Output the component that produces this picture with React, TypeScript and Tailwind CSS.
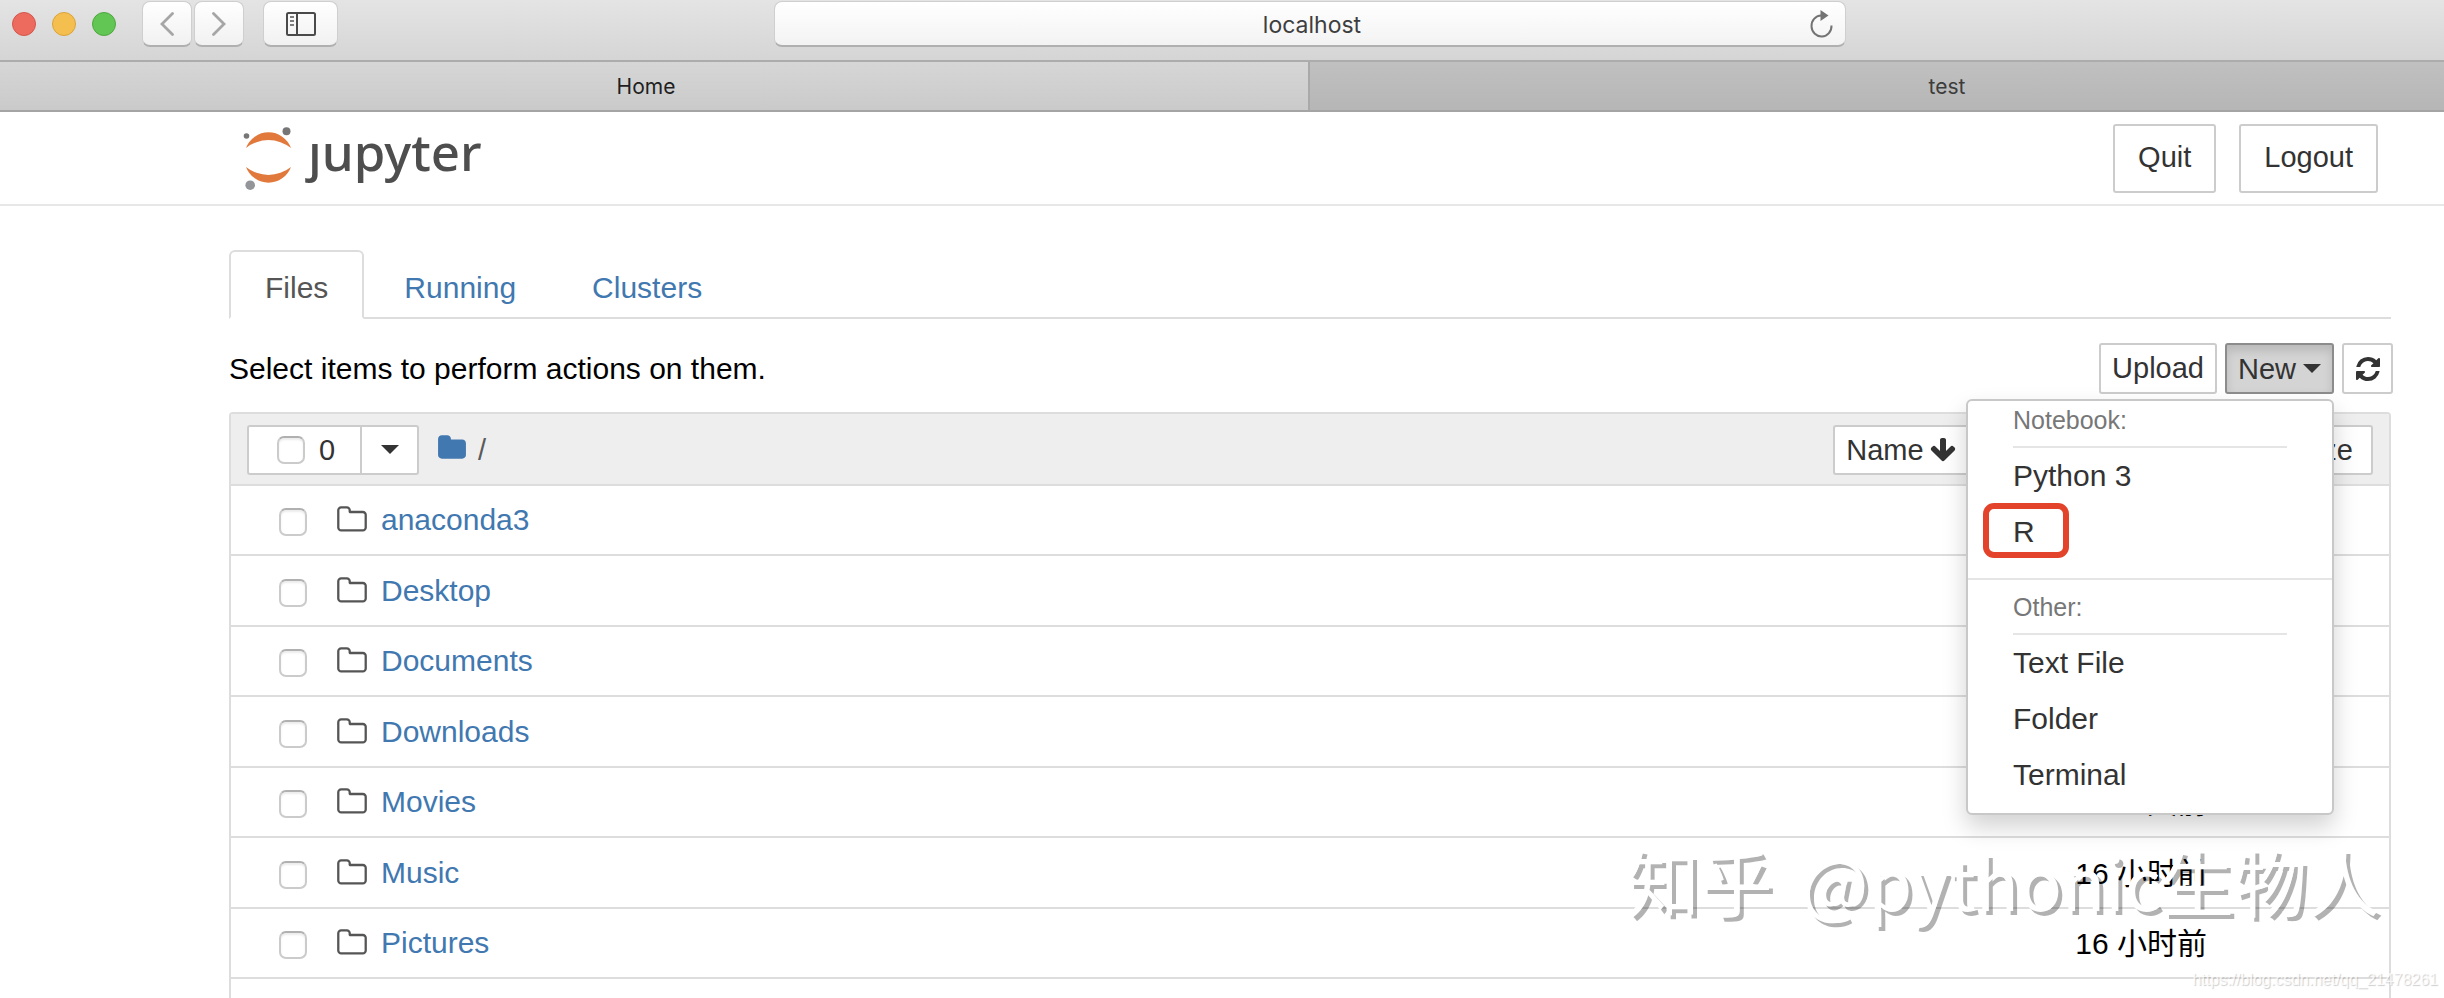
import React, { useState } from 'react';

interface FileEntry {
    name: string;
    modified?: string;
}

const FILES: FileEntry[] = [
    { name: 'anaconda3' },
    { name: 'Desktop' },
    { name: 'Documents' },
    { name: 'Downloads' },
    { name: 'Movies', modified: '9 天前' },
    { name: 'Music', modified: '16 小时前' },
    { name: 'Pictures', modified: '16 小时前' },
];

const TABS = ['Files', 'Running', 'Clusters'];

const ICONS = {
    folder: 'M1728 608v704q0 92-66 158t-158 66h-1216q-92 0-158-66t-66-158v-960q0-92 66-158t158-66h320q92 0 158 66t66 158v32h672q92 0 158 66t66 158z',
    folderOpen: 'M1600 1312v-704q0-40-28-68t-68-28h-704q-40 0-68-28t-28-68v-64q0-40-28-68t-68-28h-320q-40 0-68 28t-28 68v960q0 40 28 68t68 28h1216q40 0 68-28t28-68zm128-704v704q0 92-66 158t-158 66h-1216q-92 0-158-66t-66-158v-960q0-92 66-158t158-66h320q92 0 158 66t66 158v32h672q92 0 158 66t66 158z',
    refresh: 'M1639 1056q0 5-1 7-64 268-268 434.5t-478 166.5q-146 0-282.5-55t-243.5-157l-129 129q-19 19-45 19t-45-19-19-45v-448q0-26 19-45t45-19h448q26 0 45 19t19 45-19 45l-137 137q71 66 161 102t187 36q134 0 250-65t186-179q11-17 53-117 8-23 30-23h192q13 0 22.5 9.5t9.5 22.5zm25-800v448q0 26-19 45t-45 19h-448q-26 0-45-19t-19-45 19-45l138-138q-148-137-349-137-134 0-250 65t-186 179q-11 17-53 117-8 23-30 23h-199q-13 0-22.5-9.5t-9.5-22.5v-7q65-268 270-434.5t480-166.5q146 0 284 55.5t245 156.5l130-129q19-19 45-19t45 19 19 45z',
    arrowDown: 'M1675 832q0 53-37 90l-651 652q-39 37-91 37-53 0-90-37l-651-652q-38-36-38-90 0-53 38-91l74-75q39-37 91-37 53 0 90 37l294 294v-704q0-52 38-90t90-38h128q52 0 90 38t38 90v704l294-294q37-37 90-37 52 0 91 37l75 75q37 39 37 91z',
};

function Icon({ path, className }: { path: string; className: string }) {
    return (
        <svg viewBox="0 0 1792 1792" fill="currentColor" className={className} aria-hidden="true">
            <path d={path} />
        </svg>
    );
}

function Caret() {
    return (
        <svg viewBox="0 0 18 9" fill="currentColor" className="w-[18px] h-[9px]" aria-hidden="true">
            <path d="M0 0h18l-9 9z" />
        </svg>
    );
}

function Checkbox({ label }: { label: string }) {
    return (
        <input
            type="checkbox"
            aria-label={label}
            className="block appearance-none w-7 h-7 shrink-0 rounded-[7px] border-2 border-[#cbcbcb] border-t-[#b0b0b0] bg-white shadow-[inset_0_2px_2px_rgba(0,0,0,0.08)] checked:bg-[#4178b0]"
        />
    );
}

function BrowserChrome() {
    return (
        <div className="font-['Inter',sans-serif]">
            <div className="h-[62px] pt-px pl-3 flex items-start border-b-2 border-[#acacac] bg-linear-to-b from-[#e4e4e4] to-[#d5d5d5]">
                <div className="h-[46px] flex items-center gap-4">
                    <span className="w-6 h-6 rounded-full bg-[#ed6a5e] border border-[#d5564b]" />
                    <span className="w-6 h-6 rounded-full bg-[#f5bf4f] border border-[#d9a33c]" />
                    <span className="w-6 h-6 rounded-full bg-[#62c654] border border-[#4fa73f]" />
                </div>
                <div className="ml-[26px] flex gap-[2px]">
                    <button aria-label="Back" className="w-[50px] h-[46px] flex items-center justify-center rounded-lg border border-[#cfcfcf] border-b-2 border-b-[#b0b0b0] bg-linear-to-b from-white to-[#f1f1f1]">
                        <svg viewBox="0 0 14 24" className="w-[14px] h-6" fill="none" stroke="#a6a6a6" strokeWidth="2.8" strokeLinecap="round">
                            <path d="M12.500 1.500 2 12l10.500 10.500" />
                        </svg>
                    </button>
                    <button aria-label="Forward" className="w-[50px] h-[46px] flex items-center justify-center rounded-lg border border-[#cfcfcf] border-b-2 border-b-[#b0b0b0] bg-linear-to-b from-white to-[#f1f1f1]">
                        <svg viewBox="0 0 14 24" className="w-[14px] h-6" fill="none" stroke="#a6a6a6" strokeWidth="2.8" strokeLinecap="round">
                            <path d="M1.500 1.500 12 12 1.500 22.500" />
                        </svg>
                    </button>
                </div>
                <button aria-label="Sidebar" className="ml-[19px] w-[75px] h-[46px] flex items-center justify-center rounded-lg border border-[#cfcfcf] border-b-2 border-b-[#b0b0b0] bg-linear-to-b from-white to-[#f1f1f1]">
                    <svg viewBox="0 0 30 24" className="w-[30px] h-6" fill="none" stroke="#4a4a4a" strokeWidth="2">
                        <rect x="1" y="1" width="28" height="22" rx="1.5" />
                        <path d="M11 1v22" />
                        <path d="M4 5h4M4 9h4M4 13h4" stroke="#7d7d7d" />
                    </svg>
                </button>
                <div className="ml-[436px] mr-[598px] flex-1 h-[46px] flex items-center rounded-lg border border-[#cfcfcf] border-b-2 border-b-[#b0b0b0] bg-linear-to-b from-white to-[#f3f3f3]">
                    <input
                        aria-label="Address"
                        defaultValue="localhost"
                        className="flex-1 min-w-0 pt-[2px] pl-10 text-center text-[23px] leading-7 text-[#3e3e3e] bg-transparent outline-none"
                    />
                    <button aria-label="Reload" className="mr-3">
                        <svg viewBox="0 0 24 28" className="w-6 h-7 block" fill="none" stroke="#737373" strokeWidth="2">
                            <path d="M12 5.500a10 10.500 0 1 0 10.500 10" />
                            <path d="M11.500 0v11l8-5.500z" fill="#737373" stroke="none" />
                        </svg>
                    </button>
                </div>
            </div>
            <div className="h-[50px] flex border-b-2 border-[#a4a4a4] text-[21px] leading-6">
                <button className="w-[1310px] pt-[2px] pr-4 border-r-2 border-[#a9a9a9] text-[#1f1f1f] bg-linear-to-b from-[#d6d6d6] to-[#cacaca]">
                    Home
                </button>
                <button className="flex-1 pt-[2px] pl-[140px] text-[#3c3c3c] bg-linear-to-b from-[#c0c0c0] to-[#b6b6b6]">
                    test
                </button>
            </div>
        </div>
    );
}

function Header() {
    return (
        <header className="h-[94px] pl-[243px] pr-[66px] flex items-center justify-between border-b-2 border-[#e7e7e7]">
            <a href="#" aria-label="jupyter" className="flex items-center gap-4 text-[#4e4e4e]">
                <svg viewBox="0 0 49 63" className="w-[49px] h-[63px]" aria-hidden="true">
                    <path d="M3 21A24 24 0 0 1 48 21A36 36 0 0 0 3 21z" fill="#e2793c" />
                    <path d="M3 40A24 24 0 0 0 48 40A36 36 0 0 1 3 40z" fill="#e2793c" />
                    <circle cx="3.500" cy="9" r="2.800" fill="#767677" />
                    <circle cx="43.500" cy="4.200" r="4" fill="#767677" />
                    <circle cx="7.200" cy="58.200" r="4.800" fill="#939598" />
                </svg>
                <span className="pb-[14px] text-[51px] leading-[60px] font-medium font-['Noto_Sans',sans-serif]">ȷupyter</span>
            </a>
            <div className="flex gap-[23px] text-[29px] leading-8 text-[#333]">
                <button className="h-[69px] px-[23px] pb-[2px] border-2 border-[#ccc] rounded-[3px] bg-white">Quit</button>
                <button className="h-[69px] px-[23px] pb-[2px] border-2 border-[#ccc] rounded-[3px] bg-white">Logout</button>
            </div>
        </header>
    );
}

function NewMenu() {
    return (
        <div className="absolute right-0 top-full z-10 mt-[5px] w-[368px] pb-[10px] rounded-md border-2 border-[#c8c8c8] bg-white text-left shadow-[0_12px_24px_rgba(0,0,0,0.18)]">
            <div className="px-[45px]">
                <div className="h-[45px] pb-2 flex items-center text-[25px] leading-8 text-[#777]">Notebook:</div>
                <hr className="border-t-2 border-[#e5e5e5]" />
                <a href="#" className="h-14 pb-[2px] flex items-center">Python 3</a>
                <a href="#" className="h-14 pb-[2px] flex items-center relative">
                    R
                    <span className="absolute -left-[30px] -top-px w-[86px] h-[55px] rounded-[11px] border-[6px] border-[#e2432a]" />
                </a>
            </div>
            <hr className="mt-[18px] border-t-2 border-[#e5e5e5]" />
            <div className="px-[45px]">
                <div className="h-[53px] flex items-center text-[25px] leading-8 text-[#777]">Other:</div>
                <hr className="border-t-2 border-[#e5e5e5]" />
                <a href="#" className="h-14 pb-[2px] flex items-center">Text File</a>
                <a href="#" className="h-14 pb-[2px] flex items-center">Folder</a>
                <a href="#" className="h-14 pb-[2px] flex items-center">Terminal</a>
            </div>
        </div>
    );
}

function Toolbar() {
    const [open, setOpen] = useState(true);

    return (
        <div className="mt-6 -mr-[2px] flex items-center justify-between">
            <p className="leading-9">Select items to perform actions on them.</p>
            <div className="flex gap-2 text-[#333]">
                <button className="h-[51px] px-[11px] pb-[2px] text-[29px] leading-8 border-2 border-[#ccc] rounded-[3px] bg-white">Upload</button>
                <div className="relative">
                    <button
                        onClick={() => setOpen(!open)}
                        aria-expanded={open}
                        className="h-[51px] px-[11px] flex items-center gap-[7px] text-[29px] leading-8 border-2 border-[#8c8c8c] rounded-[3px] bg-[#d4d4d4] shadow-[inset_0_6px_10px_rgba(0,0,0,0.125)]"
                    >
                        New <Caret />
                    </button>
                    {open && <NewMenu />}
                </div>
                <button aria-label="Refresh" className="w-[51px] h-[51px] flex items-center justify-center border-2 border-[#ccc] rounded-[3px] bg-white">
                    <Icon path={ICONS.refresh} className="w-7 h-7" />
                </button>
            </div>
        </div>
    );
}

function FileList() {
    return (
        <div className="mt-[18px] flex-1 border-2 border-b-0 border-[#ddd] rounded-t-[4px]">
            <table className="w-full border-separate border-spacing-0">
                <thead>
                    <tr>
                        <th colSpan={3} className="h-[72px] p-0 border-b-2 border-[#ddd] bg-[#eee] font-normal">
                            <div className="pt-px px-4 flex items-center text-[29px] leading-8 text-[#333]">
                                <div className="h-[50px] flex border-2 border-[#ccc] rounded-[3px] bg-white">
                                    <label className="w-[113px] pl-7 flex items-center gap-[14px] border-r-2 border-[#ccc]">
                                        <Checkbox label="Select all" />
                                        0
                                    </label>
                                    <button aria-label="Selection menu" className="w-[55px] flex items-center justify-center">
                                        <Caret />
                                    </button>
                                </div>
                                <a href="#" aria-label="Home folder" className="ml-[18px] pb-[3px] text-[#4178b0]">
                                    <Icon path={ICONS.folder} className="w-[30px] h-[30px]" />
                                </a>
                                <span className="ml-[11px] text-[#5a5a5a]">/</span>
                                <button className="ml-auto h-[50px] pl-[11px] pr-[13px] flex items-center gap-[5px] border-2 border-[#ccc] rounded-[3px] bg-white">
                                    Name <Icon path={ICONS.arrowDown} className="w-7 h-7" />
                                </button>
                                <button className="ml-[261px] h-[50px] pl-3 pr-[18px] border-2 border-[#ccc] rounded-[3px] bg-white">File size</button>
                            </div>
                        </th>
                    </tr>
                </thead>
                <tbody>
                    {FILES.map((file) => (
                        <tr key={file.name} className="odd:h-[70px] even:h-[71px]">
                            <td className="w-[105px] p-0 pl-12 pt-1 border-b-2 border-[#ddd]">
                                <Checkbox label={file.name} />
                            </td>
                            <td className="p-0 border-b-2 border-[#ddd]">
                                <a href="#" className="flex items-center gap-[13px] leading-9 text-[#4178b0]">
                                    <Icon path={ICONS.folderOpen} className="w-8 h-8 text-[#555]" />
                                    {file.name}
                                </a>
                            </td>
                            <td className="p-0 pt-[2px] pr-[182px] border-b-2 border-[#ddd] text-right leading-9">{file.modified}</td>
                        </tr>
                    ))}
                </tbody>
            </table>
        </div>
    );
}

export default function App() {
    return (
        <div className="relative min-h-screen flex flex-col overflow-hidden bg-white text-black font-['Liberation_Sans','Noto_Sans_CJK_SC',sans-serif]">
            <BrowserChrome />
            <Header />
            <main className="flex-1 flex flex-col pt-11 pl-[229px] pr-[53px] text-[30px]">
                <nav className="flex gap-1 border-b-2 border-[#ddd]">
                    {TABS.map((tab, i) => (
                        <a
                            key={tab}
                            href="#"
                            className={
                                i === 0
                                    ? '-mb-[2px] h-[69px] px-[34px] pt-[6px] flex items-center border-2 border-[#ddd] border-b-white rounded-t-[6px] bg-white text-[#555]'
                                    : '-mb-[2px] h-[69px] px-9 pt-[6px] flex items-center text-[#4178b0]'
                            }
                        >
                            {tab}
                        </a>
                    ))}
                </nav>
                <Toolbar />
                <FileList />
            </main>

            {/* Watermarks */}
            <div className="absolute right-[64px] bottom-[66px] z-20 pointer-events-none text-[73px] leading-[104px] whitespace-nowrap text-white font-['Noto_Sans_CJK_SC',sans-serif] [text-shadow:4px_4px_0_rgba(0,0,0,0.3)]">
                知乎 <span className="ml-3 text-[71px]">@pythonic</span>生物人
            </div>
            <div className="absolute right-[6px] bottom-[6px] z-20 pointer-events-none text-[16px] leading-6 whitespace-nowrap text-white/80 [text-shadow:1px_1px_1px_rgba(0,0,0,0.2)]">
                https://blog.csdn.net/qq_21478261
            </div>
        </div>
    );
}
